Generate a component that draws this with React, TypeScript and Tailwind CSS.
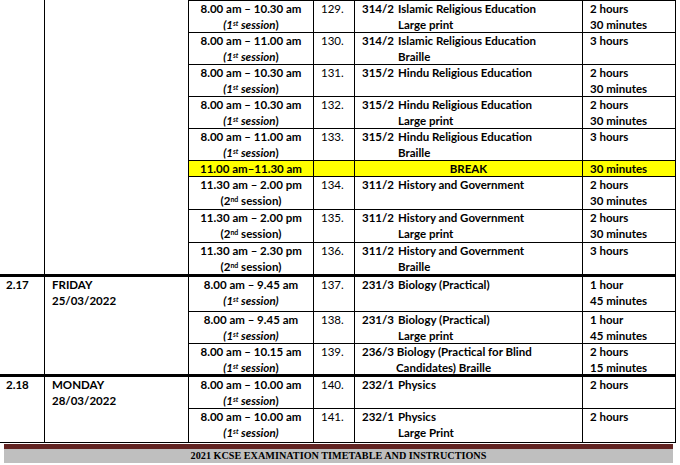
import React from "react";

const cell = "border-r border-b border-black";

function Sess({ n, italic, parenItalic }: { n: 1 | 2; italic?: boolean; parenItalic?: boolean }) {
  const sup = n === 1 ? "st" : "nd";
  const inner = (
    <>
      {n}
      <sup className="text-[7px]">{sup}</sup> session
    </>
  );
  if (!italic) {
    return (
      <span>
        ({inner})
      </span>
    );
  }
  return (
    <span>
      <i>({inner}{parenItalic ? ")" : ""}</i>
      {parenItalic ? "" : ")"}
    </span>
  );
}

type R = {
  h: string;
  time: string;
  sess: React.ReactNode;
  num: string;
  code: string;
  name: string;
  sub?: string;
  d1: string;
  d2?: string;
  top?: boolean;
  noBottom?: boolean;
  custom?: boolean;
};

function ExamRow({ r }: { r: R }) {
  const b = r.noBottom ? "border-r border-black" : cell;
  const t = r.top ? " border-t" : "";
  return (
    <>
      <div className={`${b}${t} ${r.h} text-center font-bold`}>
        <div>{r.time}</div>
        <div>{r.sess}</div>
      </div>
      <div className={`${b}${t} ${r.h} pl-[7px]`}>{r.num}</div>
      <div className={`${b}${t} ${r.h} pl-[7px] font-bold`}>
        {r.custom ? (
          <>
            <div>
              {r.code} {r.name}
            </div>
            <div className="pl-[34px]">{r.sub}</div>
          </>
        ) : (
          <div className="flex">
            <div className="w-[36px] shrink-0">{r.code}</div>
            <div>
              <div>{r.name}</div>
              {r.sub && <div>{r.sub}</div>}
            </div>
          </div>
        )}
      </div>
      <div className={`${b}${t} ${r.h} pl-[7px] font-bold`}>
        <div>{r.d1}</div>
        {r.d2 && <div>{r.d2}</div>}
      </div>
    </>
  );
}

const groupA: R[] = [
  { h: "h-[33px]", top: true, time: "8.00 am – 10.30 am", sess: <Sess n={1} italic />, num: "129.", code: "314/2", name: "Islamic Religious Education", sub: "Large print", d1: "2 hours", d2: "30 minutes" },
  { h: "h-[32px]", time: "8.00 am – 11.00 am", sess: <Sess n={1} italic />, num: "130.", code: "314/2", name: "Islamic Religious Education", sub: "Braille", d1: "3 hours" },
  { h: "h-[32px]", time: "8.00 am – 10.30 am", sess: <Sess n={1} italic />, num: "131.", code: "315/2", name: "Hindu Religious Education", d1: "2 hours", d2: "30 minutes" },
  { h: "h-[32px]", time: "8.00 am – 10.30 am", sess: <Sess n={1} italic />, num: "132.", code: "315/2", name: "Hindu Religious Education", sub: "Large print", d1: "2 hours", d2: "30 minutes" },
  { h: "h-[32px]", time: "8.00 am – 11.00 am", sess: <Sess n={1} italic />, num: "133.", code: "315/2", name: "Hindu Religious Education", sub: "Braille", d1: "3 hours" },
];

const groupA2: R[] = [
  { h: "h-[33px]", time: "11.30 am – 2.00 pm", sess: <Sess n={2} />, num: "134.", code: "311/2", name: "History and Government", d1: "2 hours", d2: "30 minutes" },
  { h: "h-[33px]", time: "11.30 am – 2.00 pm", sess: <Sess n={2} />, num: "135.", code: "311/2", name: "History and Government", sub: "Large print", d1: "2 hours", d2: "30 minutes" },
  { h: "h-[31px]", noBottom: true, time: "11.30 am – 2.30 pm", sess: <Sess n={2} />, num: "136.", code: "311/2", name: "History and Government", sub: "Braille", d1: "3 hours" },
];

const groupB: R[] = [
  { h: "h-[35px]", time: "8.00 am – 9.45 am", sess: <Sess n={1} italic parenItalic />, num: "137.", code: "231/3", name: "Biology (Practical)", d1: "1 hour", d2: "45 minutes" },
  { h: "h-[32px]", time: "8.00 am – 9.45 am", sess: <Sess n={1} italic parenItalic />, num: "138.", code: "231/3", name: "Biology (Practical)", sub: "Large print", d1: "1 hour", d2: "45 minutes" },
  { h: "h-[30px]", noBottom: true, custom: true, time: "8.00 am – 10.15 am", sess: <Sess n={1} italic />, num: "139.", code: "236/3", name: "Biology (Practical for Blind", sub: "Candidates) Braille", d1: "2 hours", d2: "15 minutes" },
];

const groupC: R[] = [
  { h: "h-[32px]", time: "8.00 am – 10.00 am", sess: <Sess n={1} italic />, num: "140.", code: "232/1", name: "Physics", d1: "2 hours" },
  { h: "h-[34px]", time: "8.00 am – 10.00 am", sess: <Sess n={1} italic parenItalic />, num: "141.", code: "232/1", name: "Physics", sub: "Large Print", d1: "2 hours" },
];

const grid = "grid grid-cols-[45px_144px_125px_41px_228px_93px] w-[676px]";

export default function App() {
  return (
    <div className="w-[680px] h-[465px] bg-white text-black overflow-hidden font-['Lato','Noto_Sans',sans-serif] text-[11.5px] leading-[16px]">
      {/* Group A: continuation */}
      <div className={grid}>
        <div className="row-span-9 col-start-1 border-r border-black"></div>
        <div className="row-span-9 col-start-2 border-r border-black"></div>
        {groupA.map((r) => (
          <ExamRow key={r.num} r={r} />
        ))}
        <div className={`${cell} h-[16px] bg-[#ffff00] text-center font-bold`}>11.00 am–11.30 am</div>
        <div className={`${cell} h-[16px] bg-[#ffff00]`}></div>
        <div className={`${cell} h-[16px] bg-[#ffff00] text-center font-bold`}>BREAK</div>
        <div className={`${cell} h-[16px] bg-[#ffff00] pl-[7px] font-bold`}>30 minutes</div>
        {groupA2.map((r) => (
          <ExamRow key={r.num} r={r} />
        ))}
      </div>
      <div className="h-[3px] w-[676px] bg-black"></div>
      {/* Group B: Friday */}
      <div className={grid}>
        <div className="row-span-3 col-start-1 border-r border-black pl-[6px] font-bold">2.17</div>
        <div className="row-span-3 col-start-2 border-r border-black pl-[7px] font-bold">
          <div>FRIDAY</div>
          <div>25/03/2022</div>
        </div>
        {groupB.map((r) => (
          <ExamRow key={r.num} r={r} />
        ))}
      </div>
      <div className="h-[3px] w-[676px] bg-black"></div>
      {/* Group C: Monday */}
      <div className={grid}>
        <div className="row-span-2 col-start-1 border-r border-b border-black pl-[6px] font-bold">2.18</div>
        <div className="row-span-2 col-start-2 border-r border-b border-black pl-[7px] font-bold">
          <div>MONDAY</div>
          <div>28/03/2022</div>
        </div>
        {groupC.map((r) => (
          <ExamRow key={r.num} r={r} />
        ))}
      </div>
      {/* Footer header bar */}
      <div className="ml-[4px] mt-[1px] w-[669px]">
        <div className="h-[5px] bg-[#632523]"></div>
        <div className="h-[14px] bg-[#bfbfbf] flex items-center justify-center font-['Liberation_Serif',serif] font-bold text-[10.2px] leading-[14px]">
          2021 KCSE EXAMINATION TIMETABLE AND INSTRUCTIONS
        </div>
      </div>
    </div>
  );
}
